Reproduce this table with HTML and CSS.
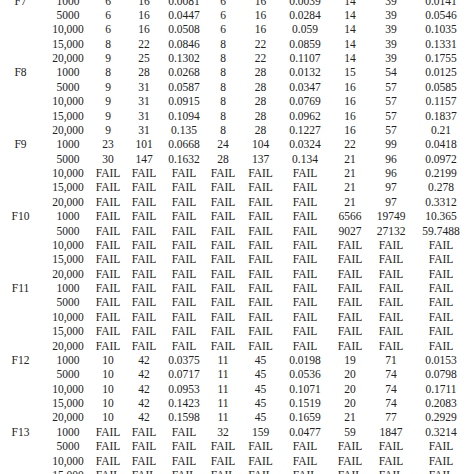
FILE: index.html
```html
<!DOCTYPE html>
<html>
<head>
<meta charset="utf-8">
<link rel="stylesheet" href="styles.css">
</head>
<body>
<table class="results">
<colgroup>
<col class="c0"><col class="c1"><col class="c2"><col class="c3"><col class="c4"><col class="c5"><col class="c6"><col class="c7"><col class="c8"><col class="c9"><col class="c10">
</colgroup>
<tbody>
<tr><td>F7</td><td>1000</td><td>6</td><td>16</td><td>0.0081</td><td>6</td><td>16</td><td>0.0039</td><td>14</td><td>39</td><td>0.0141</td></tr>
<tr><td></td><td>5000</td><td>6</td><td>16</td><td>0.0447</td><td>6</td><td>16</td><td>0.0284</td><td>14</td><td>39</td><td>0.0546</td></tr>
<tr><td></td><td>10,000</td><td>6</td><td>16</td><td>0.0508</td><td>6</td><td>16</td><td>0.059</td><td>14</td><td>39</td><td>0.1035</td></tr>
<tr><td></td><td>15,000</td><td>8</td><td>22</td><td>0.0846</td><td>8</td><td>22</td><td>0.0859</td><td>14</td><td>39</td><td>0.1331</td></tr>
<tr><td></td><td>20,000</td><td>9</td><td>25</td><td>0.1302</td><td>8</td><td>22</td><td>0.1107</td><td>14</td><td>39</td><td>0.1755</td></tr>
<tr><td>F8</td><td>1000</td><td>8</td><td>28</td><td>0.0268</td><td>8</td><td>28</td><td>0.0132</td><td>15</td><td>54</td><td>0.0125</td></tr>
<tr><td></td><td>5000</td><td>9</td><td>31</td><td>0.0587</td><td>8</td><td>28</td><td>0.0347</td><td>16</td><td>57</td><td>0.0585</td></tr>
<tr><td></td><td>10,000</td><td>9</td><td>31</td><td>0.0915</td><td>8</td><td>28</td><td>0.0769</td><td>16</td><td>57</td><td>0.1157</td></tr>
<tr><td></td><td>15,000</td><td>9</td><td>31</td><td>0.1094</td><td>8</td><td>28</td><td>0.0962</td><td>16</td><td>57</td><td>0.1837</td></tr>
<tr><td></td><td>20,000</td><td>9</td><td>31</td><td>0.135</td><td>8</td><td>28</td><td>0.1227</td><td>16</td><td>57</td><td>0.21</td></tr>
<tr><td>F9</td><td>1000</td><td>23</td><td>101</td><td>0.0668</td><td>24</td><td>104</td><td>0.0324</td><td>22</td><td>99</td><td>0.0418</td></tr>
<tr><td></td><td>5000</td><td>30</td><td>147</td><td>0.1632</td><td>28</td><td>137</td><td>0.134</td><td>21</td><td>96</td><td>0.0972</td></tr>
<tr><td></td><td>10,000</td><td>FAIL</td><td>FAIL</td><td>FAIL</td><td>FAIL</td><td>FAIL</td><td>FAIL</td><td>21</td><td>96</td><td>0.2199</td></tr>
<tr><td></td><td>15,000</td><td>FAIL</td><td>FAIL</td><td>FAIL</td><td>FAIL</td><td>FAIL</td><td>FAIL</td><td>21</td><td>97</td><td>0.278</td></tr>
<tr><td></td><td>20,000</td><td>FAIL</td><td>FAIL</td><td>FAIL</td><td>FAIL</td><td>FAIL</td><td>FAIL</td><td>21</td><td>97</td><td>0.3312</td></tr>
<tr><td>F10</td><td>1000</td><td>FAIL</td><td>FAIL</td><td>FAIL</td><td>FAIL</td><td>FAIL</td><td>FAIL</td><td>6566</td><td>19749</td><td>10.365</td></tr>
<tr><td></td><td>5000</td><td>FAIL</td><td>FAIL</td><td>FAIL</td><td>FAIL</td><td>FAIL</td><td>FAIL</td><td>9027</td><td>27132</td><td>59.7488</td></tr>
<tr><td></td><td>10,000</td><td>FAIL</td><td>FAIL</td><td>FAIL</td><td>FAIL</td><td>FAIL</td><td>FAIL</td><td>FAIL</td><td>FAIL</td><td>FAIL</td></tr>
<tr><td></td><td>15,000</td><td>FAIL</td><td>FAIL</td><td>FAIL</td><td>FAIL</td><td>FAIL</td><td>FAIL</td><td>FAIL</td><td>FAIL</td><td>FAIL</td></tr>
<tr><td></td><td>20,000</td><td>FAIL</td><td>FAIL</td><td>FAIL</td><td>FAIL</td><td>FAIL</td><td>FAIL</td><td>FAIL</td><td>FAIL</td><td>FAIL</td></tr>
<tr><td>F11</td><td>1000</td><td>FAIL</td><td>FAIL</td><td>FAIL</td><td>FAIL</td><td>FAIL</td><td>FAIL</td><td>FAIL</td><td>FAIL</td><td>FAIL</td></tr>
<tr><td></td><td>5000</td><td>FAIL</td><td>FAIL</td><td>FAIL</td><td>FAIL</td><td>FAIL</td><td>FAIL</td><td>FAIL</td><td>FAIL</td><td>FAIL</td></tr>
<tr><td></td><td>10,000</td><td>FAIL</td><td>FAIL</td><td>FAIL</td><td>FAIL</td><td>FAIL</td><td>FAIL</td><td>FAIL</td><td>FAIL</td><td>FAIL</td></tr>
<tr><td></td><td>15,000</td><td>FAIL</td><td>FAIL</td><td>FAIL</td><td>FAIL</td><td>FAIL</td><td>FAIL</td><td>FAIL</td><td>FAIL</td><td>FAIL</td></tr>
<tr><td></td><td>20,000</td><td>FAIL</td><td>FAIL</td><td>FAIL</td><td>FAIL</td><td>FAIL</td><td>FAIL</td><td>FAIL</td><td>FAIL</td><td>FAIL</td></tr>
<tr><td>F12</td><td>1000</td><td>10</td><td>42</td><td>0.0375</td><td>11</td><td>45</td><td>0.0198</td><td>19</td><td>71</td><td>0.0153</td></tr>
<tr><td></td><td>5000</td><td>10</td><td>42</td><td>0.0717</td><td>11</td><td>45</td><td>0.0536</td><td>20</td><td>74</td><td>0.0798</td></tr>
<tr><td></td><td>10,000</td><td>10</td><td>42</td><td>0.0953</td><td>11</td><td>45</td><td>0.1071</td><td>20</td><td>74</td><td>0.1711</td></tr>
<tr><td></td><td>15,000</td><td>10</td><td>42</td><td>0.1423</td><td>11</td><td>45</td><td>0.1519</td><td>20</td><td>74</td><td>0.2083</td></tr>
<tr><td></td><td>20,000</td><td>10</td><td>42</td><td>0.1598</td><td>11</td><td>45</td><td>0.1659</td><td>21</td><td>77</td><td>0.2929</td></tr>
<tr><td>F13</td><td>1000</td><td>FAIL</td><td>FAIL</td><td>FAIL</td><td>32</td><td>159</td><td>0.0477</td><td>59</td><td>1847</td><td>0.3214</td></tr>
<tr><td></td><td>5000</td><td>FAIL</td><td>FAIL</td><td>FAIL</td><td>FAIL</td><td>FAIL</td><td>FAIL</td><td>FAIL</td><td>FAIL</td><td>FAIL</td></tr>
<tr><td></td><td>10,000</td><td>FAIL</td><td>FAIL</td><td>FAIL</td><td>FAIL</td><td>FAIL</td><td>FAIL</td><td>FAIL</td><td>FAIL</td><td>FAIL</td></tr>
<tr><td></td><td>15,000</td><td>FAIL</td><td>FAIL</td><td>FAIL</td><td>FAIL</td><td>FAIL</td><td>FAIL</td><td>FAIL</td><td>FAIL</td><td>FAIL</td></tr>
<tr><td></td><td>20,000</td><td>FAIL</td><td>FAIL</td><td>FAIL</td><td>FAIL</td><td>FAIL</td><td>FAIL</td><td>FAIL</td><td>FAIL</td><td>FAIL</td></tr>
</tbody>
</table>
</body>
</html>
```
FILE: styles.css
```css
html, body {
  margin: 0;
  padding: 0;
  background: #ffffff;
  overflow: hidden;
}
.results {
  margin-top: -6.4px;
  border-collapse: collapse;
  border-spacing: 0;
  table-layout: fixed;
  width: 466px;
  font-family: "Liberation Serif", "Times New Roman", serif;
  font-size: 11.5px;
  color: #222222;
}
.results td {
  padding: 0;
  height: 14.38px;
  line-height: 14.38px;
  text-align: center;
  white-space: nowrap;
  overflow: visible;
}
.c0 { width: 41px; }
.c1 { width: 54px; }
.c2 { width: 26px; }
.c3 { width: 46px; }
.c4 { width: 34px; }
.c5 { width: 44px; }
.c6 { width: 31px; }
.c7 { width: 58px; }
.c8 { width: 32px; }
.c9 { width: 50px; }
.c10 { width: 50px; }
```
